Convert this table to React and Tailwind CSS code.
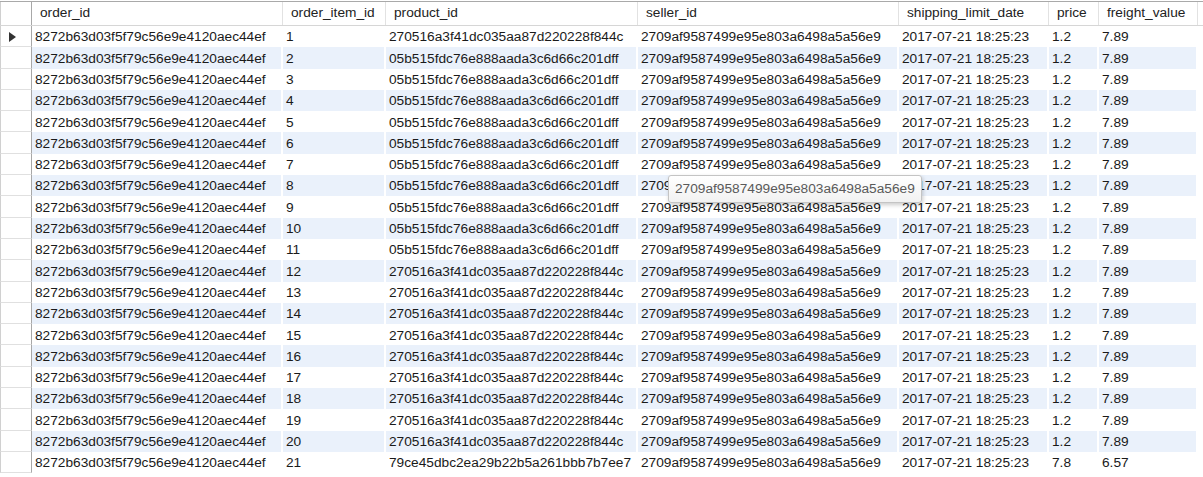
const cols = [
  { key: 'order_id', w: 'w-[251px]' },
  { key: 'order_item_id', w: 'w-[103px]' },
  { key: 'product_id', w: 'w-[252px]' },
  { key: 'seller_id', w: 'w-[261px]' },
  { key: 'shipping_limit_date', w: 'w-[150px]' },
  { key: 'price', w: 'w-[50px]' },
  { key: 'freight_value', w: 'w-[99px]' },
]

const ORDER = '8272b63d03f5f79c56e9e4120aec44ef'
const SELLER = '2709af9587499e95e803a6498a5a56e9'
const P1 = '270516a3f41dc035aa87d220228f844c'
const P2 = '05b515fdc76e888aada3c6d66c201dff'
const P3 = '79ce45dbc2ea29b22b5a261bbb7b7ee7'

const rows = Array.from({ length: 21 }, (_, i) => {
  const n = i + 1
  const product = n === 1 ? P1 : n <= 11 ? P2 : n <= 20 ? P1 : P3
  return [ORDER, String(n), product, SELLER, '2017-07-21 18:25:23', n === 21 ? '7.8' : '1.2', n === 21 ? '6.57' : '7.89']
})

export default function App() {
  return (
    <div className="relative w-[1203px] h-[477px] overflow-hidden bg-white pt-[1px] text-[13.7px] text-[#1a1a1a] font-['Liberation_Sans',Arial,sans-serif]">
      {/* header */}
      <div className="flex h-[25px] border-t border-b border-t-[#a9a9a9] border-b-[#d6d6d6]">
        <div className="w-[32px] shrink-0 border-l border-r border-l-[#d0d0d0] border-r-[#a8a8a8]" />
        {cols.map((c) => (
          <div key={c.key} className={`${c.w} shrink-0 flex items-center pl-[8px] border-r border-[#e2e2e2] text-[#222]`}>
            {c.key}
          </div>
        ))}
      </div>

      {/* rows */}
      {rows.map((r, i) => (
        <div key={i} className="flex h-[21.3px]">
          <div className="w-[32px] shrink-0 flex items-center pl-[8px] pt-[2px] border-l border-r border-b border-l-[#d0d0d0] border-r-[#a8a8a8] border-b-[#e0e0e0]">
            {i === 0 && (
              <svg width="7" height="10" viewBox="0 0 7 10">
                <path d="M0 0 L7 5 L0 10 Z" fill="#333" />
              </svg>
            )}
          </div>
          {r.map((v, j) => (
            <div
              key={j}
              className={`${cols[j].w} shrink-0 flex items-center pl-[3px] pt-[2px] whitespace-nowrap overflow-hidden border-r-2 border-white ${i % 2 === 1 ? 'bg-[#eaf1fb]' : 'bg-white'}`}
            >
              {v}
            </div>
          ))}
        </div>
      ))}

      {/* tooltip */}
      <div className="absolute left-[668px] top-[175px] w-[254px] h-[28px] flex items-center pl-[6px] rounded-[3px] border border-[#c4c4c4] bg-gradient-to-b from-white to-[#f2f2f2] text-[#5a5a5a] shadow-[1px_2px_4px_rgba(0,0,0,0.2)]">
        {SELLER}
      </div>
    </div>
  )
}
